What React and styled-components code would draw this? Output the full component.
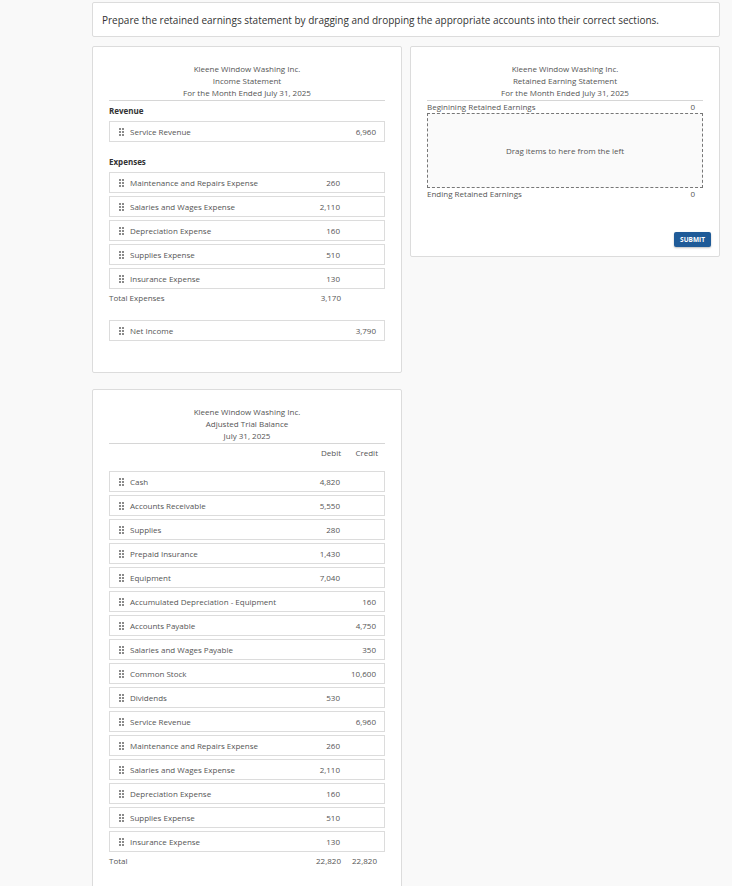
import styled, { createGlobalStyle } from "styled-components";

const GlobalStyle = createGlobalStyle`
  body {
    margin: 0;
    background: #f9f9f9;
    font-family: "Open Sans", "Liberation Sans", sans-serif;
    color: #444;
  }
`;

const Page = styled.div`
  padding: 2px 12px 0 92px;
  display: flex;
  flex-direction: column;
  gap: 9px;
`;

const Instructions = styled.div`
  background: #fff;
  border: 1px solid #dcdcdc;
  border-radius: 2px;
  height: 33px;
  padding: 0 9px;
  display: flex;
  align-items: center;
  font-size: 10px;
  color: #333;
`;

const Columns = styled.div`
  display: grid;
  grid-template-columns: 310px 310px;
  gap: 8px;
  align-items: start;
`;

const LeftColumn = styled.div`
  display: flex;
  flex-direction: column;
  gap: 16px;
`;

const Card = styled.div`
  background: #fff;
  border: 1px solid #dcdcdc;
  border-radius: 2px;
  padding: ${(p) => p.$pad || "16px 16px 28px 16px"};
  font-size: 8px;
  line-height: 12px;
`;

const Heading = styled.div`
  text-align: center;
  color: #555;
  border-bottom: 1px solid #d6d6d6;
  padding-bottom: 1px;
`;

const SectionLabel = styled.div`
  font-weight: 700;
  color: #333;
  margin-top: ${(p) => p.$top || 5}px;
  margin-bottom: 4px;
`;

const Row = styled.div`
  display: flex;
  align-items: center;
  height: 19px;
  border: 1px solid #dcdcdc;
  padding: 0 8px 0 9px;
  margin-bottom: 3px;
  background: #fff;
`;

const Handle = styled.svg`
  flex: none;
  margin-right: 6px;
`;

const Label = styled.span`
  flex: 1;
  color: #555;
`;

const Amount = styled.span`
  flex: none;
  width: ${(p) => p.$w || 50}px;
  text-align: right;
  color: #555;
`;

const TotalLine = styled.div`
  display: flex;
  align-items: center;
  height: 12px;
  padding-right: 8px;
  margin-top: ${(p) => p.$top || 0}px;
  margin-bottom: ${(p) => p.$bottom || 0}px;
`;

const ColumnHeads = styled.div`
  display: flex;
  padding-right: 7px;
  margin: 3px 0 12px;
  color: #555;
`;

const DropZone = styled.div`
  height: 73px;
  border: 1px dashed #777;
  display: flex;
  align-items: center;
  justify-content: center;
  color: #555;
  background: #fafafa;
`;

const SubmitBar = styled.div`
  display: flex;
  justify-content: flex-end;
  margin: 32px -8px 0 0;
`;

const SubmitButton = styled.button`
  background: #1f5b98;
  color: #fff;
  border: none;
  border-radius: 2px;
  font-family: inherit;
  font-size: 6.5px;
  font-weight: 700;
  width: 37px;
  height: 15px;
  padding: 0;
  box-shadow: 0 1px 2px rgba(0, 0, 0, 0.25);
`;

function DragHandle() {
  return (
    <Handle width="5" height="8" viewBox="0 0 5 8">
      {[0, 3, 6].map((y) =>
        [0, 3].map((x) => (
          <rect key={`${x}-${y}`} x={x} y={y} width="2" height="2" fill="#8a8a8a" />
        ))
      )}
    </Handle>
  );
}

function Item({ name, debit, credit }) {
  return (
    <Row>
      <DragHandle />
      <Label>{name}</Label>
      <Amount>{debit}</Amount>
      <Amount $w={36}>{credit}</Amount>
    </Row>
  );
}

const expenses = [
  ["Maintenance and Repairs Expense", "260"],
  ["Salaries and Wages Expense", "2,110"],
  ["Depreciation Expense", "160"],
  ["Supplies Expense", "510"],
  ["Insurance Expense", "130"],
];

const trialBalance = [
  ["Cash", "4,820", ""],
  ["Accounts Receivable", "5,550", ""],
  ["Supplies", "280", ""],
  ["Prepaid Insurance", "1,430", ""],
  ["Equipment", "7,040", ""],
  ["Accumulated Depreciation - Equipment", "", "160"],
  ["Accounts Payable", "", "4,750"],
  ["Salaries and Wages Payable", "", "350"],
  ["Common Stock", "", "10,600"],
  ["Dividends", "530", ""],
  ["Service Revenue", "", "6,960"],
  ...expenses.map(([n, v]) => [n, v, ""]),
];

function App() {
  return (
    <>
      <GlobalStyle />
      <Page>
        <Instructions>
          Prepare the retained earnings statement by dragging and dropping the
          appropriate accounts into their correct sections.
        </Instructions>
        <Columns>
          <LeftColumn>
            <Card>
              <Heading>
                <div>Kleene Window Washing Inc.</div>
                <div>Income Statement</div>
                <div>For the Month Ended July 31, 2025</div>
              </Heading>
              <SectionLabel $top={4}>Revenue</SectionLabel>
              <Item name="Service Revenue" credit="6,960" />
              <SectionLabel $top={14}>Expenses</SectionLabel>
              {expenses.map(([name, value]) => (
                <Item key={name} name={name} debit={value} />
              ))}
              <TotalLine $bottom={16}>
                <Label>Total Expenses</Label>
                <Amount>3,170</Amount>
                <Amount $w={36} />
              </TotalLine>
              <Item name="Net Income" credit="3,790" />
            </Card>

            <Card $pad="16px 16px 40px 16px">
              <Heading>
                <div>Kleene Window Washing Inc.</div>
                <div>Adjusted Trial Balance</div>
                <div>July 31, 2025</div>
              </Heading>
              <ColumnHeads>
                <Label />
                <Amount>Debit</Amount>
                <Amount $w={37}>Credit</Amount>
              </ColumnHeads>
              {trialBalance.map(([name, debit, credit], i) => (
                <Item key={i} name={name} debit={debit} credit={credit} />
              ))}
              <TotalLine>
                <Label>Total</Label>
                <Amount>22,820</Amount>
                <Amount $w={36}>22,820</Amount>
              </TotalLine>
            </Card>
          </LeftColumn>

          <Card $pad="16px 16px 9px 16px">
            <Heading>
              <div>Kleene Window Washing Inc.</div>
              <div>Retained Earning Statement</div>
              <div>For the Month Ended July 31, 2025</div>
            </Heading>
            <TotalLine>
              <Label>Beginining Retained Earnings</Label>
              <Amount>0</Amount>
            </TotalLine>
            <DropZone>Drag items to here from the left</DropZone>
            <TotalLine>
              <Label>Ending Retained Earnings</Label>
              <Amount>0</Amount>
            </TotalLine>
            <SubmitBar>
              <SubmitButton>SUBMIT</SubmitButton>
            </SubmitBar>
          </Card>
        </Columns>
      </Page>
    </>
  );
}

export default App;
